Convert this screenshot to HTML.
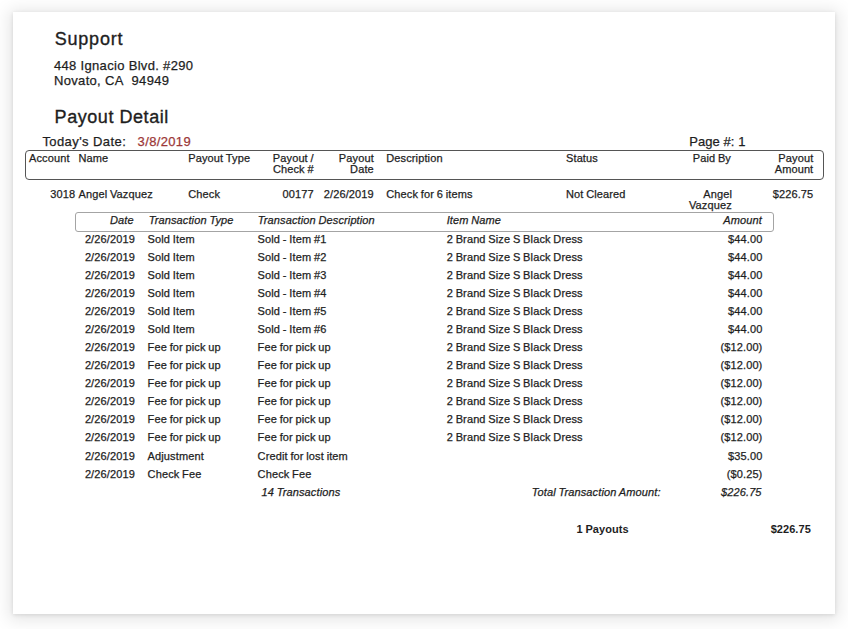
<!DOCTYPE html>
<html><head><meta charset="utf-8">
<style>
html,body{margin:0;padding:0;background:#fff;}
body{width:848px;height:629px;position:relative;overflow:hidden;font-family:"Liberation Sans",sans-serif;color:#1e1e1e;font-size:11px;word-spacing:-0.45px;}
#page{position:absolute;left:13px;top:12px;width:822px;height:602px;background:#fff;box-shadow:0 1px 4px rgba(0,0,0,0.11),0 2px 16px 4px rgba(0,0,0,0.10);}
.t{position:absolute;white-space:nowrap;line-height:1;-webkit-text-stroke:0.25px #1e1e1e;}
.box{position:absolute;box-sizing:border-box;}
</style></head><body>
<div id="page"></div>
<div class="box" style="left:25.3px;top:150.4px;width:799.2px;height:29.3px;border:1.8px solid #555;border-radius:4px;"></div>
<div class="box" style="left:75.3px;top:212.3px;width:698.6px;height:20.1px;border:1.7px solid #a4a4a4;border-radius:3px;"></div>
<div class="t" style="left:54.70px;top:30.46px;font-size:18px;word-spacing:0;letter-spacing:0.8px;-webkit-text-stroke:0.35px #1e1e1e;">Support</div>
<div class="t" style="left:54.00px;top:58.80px;font-size:13px;word-spacing:0;letter-spacing:0.32px;">448 Ignacio Blvd. #290</div>
<div class="t" style="left:54.00px;top:73.80px;font-size:13px;word-spacing:0;letter-spacing:0.32px;">Novato, CA&nbsp; 94949</div>
<div class="t" style="left:54.60px;top:107.96px;font-size:18px;word-spacing:0;letter-spacing:0.55px;-webkit-text-stroke:0.35px #1e1e1e;">Payout Detail</div>
<div class="t" style="left:42.40px;top:134.90px;font-size:13px;word-spacing:0;letter-spacing:0.42px;">Today's Date:</div>
<div class="t" style="left:137.60px;top:134.90px;font-size:13px;word-spacing:0;letter-spacing:0.35px;color:#9c3838;-webkit-text-stroke:0.25px #9c3838;">3/8/2019</div>
<div class="t" style="left:689.20px;top:134.90px;font-size:13px;word-spacing:0;letter-spacing:0.08px;">Page #: 1</div>
<div class="t" style="left:29.00px;top:153.49px;letter-spacing:0.12px;">Account</div>
<div class="t" style="left:78.50px;top:153.49px;letter-spacing:0.12px;">Name</div>
<div class="t" style="left:188.30px;top:153.49px;letter-spacing:0.12px;">Payout Type</div>
<div class="t" style="right:534.30px;top:153.49px;letter-spacing:0.12px;">Payout /</div>
<div class="t" style="right:534.30px;top:164.49px;letter-spacing:0.12px;">Check #</div>
<div class="t" style="right:474.20px;top:153.49px;letter-spacing:0.12px;">Payout</div>
<div class="t" style="right:474.20px;top:164.49px;letter-spacing:0.12px;">Date</div>
<div class="t" style="left:386.30px;top:153.49px;letter-spacing:0.12px;">Description</div>
<div class="t" style="left:566.00px;top:153.49px;letter-spacing:0.12px;">Status</div>
<div class="t" style="right:117.00px;top:153.49px;letter-spacing:0.12px;">Paid By</div>
<div class="t" style="right:34.70px;top:153.49px;letter-spacing:0.12px;">Payout</div>
<div class="t" style="right:34.70px;top:164.49px;letter-spacing:0.12px;">Amount</div>
<div class="t" style="left:50.20px;top:188.69px;letter-spacing:0.12px;">3018</div>
<div class="t" style="left:78.50px;top:188.69px;letter-spacing:0.12px;">Angel Vazquez</div>
<div class="t" style="left:188.30px;top:188.69px;letter-spacing:0.12px;">Check</div>
<div class="t" style="right:534.30px;top:188.69px;letter-spacing:0.12px;">00177</div>
<div class="t" style="right:474.20px;top:188.69px;letter-spacing:0.12px;">2/26/2019</div>
<div class="t" style="left:386.30px;top:188.69px;letter-spacing:0.12px;">Check for 6 items</div>
<div class="t" style="left:566.00px;top:188.69px;letter-spacing:0.12px;">Not Cleared</div>
<div class="t" style="right:116.00px;top:188.69px;letter-spacing:0.12px;">Angel</div>
<div class="t" style="right:116.20px;top:199.89px;letter-spacing:0.12px;">Vazquez</div>
<div class="t" style="right:34.70px;top:188.69px;letter-spacing:0.12px;">$226.75</div>
<div class="t" style="right:714.30px;top:214.89px;letter-spacing:0.12px;font-style:italic;">Date</div>
<div class="t" style="left:148.70px;top:214.89px;letter-spacing:0.12px;font-style:italic;">Transaction Type</div>
<div class="t" style="left:257.80px;top:214.89px;letter-spacing:0.12px;font-style:italic;">Transaction Description</div>
<div class="t" style="left:446.70px;top:214.89px;letter-spacing:0.12px;font-style:italic;">Item Name</div>
<div class="t" style="right:86.00px;top:214.89px;letter-spacing:0.12px;font-style:italic;">Amount</div>
<div class="t" style="right:713.10px;top:233.59px;letter-spacing:0.12px;">2/26/2019</div>
<div class="t" style="left:147.60px;top:233.59px;letter-spacing:0.12px;">Sold Item</div>
<div class="t" style="left:257.60px;top:233.59px;letter-spacing:0.12px;">Sold - Item #1</div>
<div class="t" style="left:446.70px;top:233.59px;letter-spacing:0.12px;">2 Brand Size S Black Dress</div>
<div class="t" style="right:85.60px;top:233.59px;letter-spacing:0.12px;">$44.00</div>
<div class="t" style="right:713.10px;top:251.67px;letter-spacing:0.12px;">2/26/2019</div>
<div class="t" style="left:147.60px;top:251.67px;letter-spacing:0.12px;">Sold Item</div>
<div class="t" style="left:257.60px;top:251.67px;letter-spacing:0.12px;">Sold - Item #2</div>
<div class="t" style="left:446.70px;top:251.67px;letter-spacing:0.12px;">2 Brand Size S Black Dress</div>
<div class="t" style="right:85.60px;top:251.67px;letter-spacing:0.12px;">$44.00</div>
<div class="t" style="right:713.10px;top:269.75px;letter-spacing:0.12px;">2/26/2019</div>
<div class="t" style="left:147.60px;top:269.75px;letter-spacing:0.12px;">Sold Item</div>
<div class="t" style="left:257.60px;top:269.75px;letter-spacing:0.12px;">Sold - Item #3</div>
<div class="t" style="left:446.70px;top:269.75px;letter-spacing:0.12px;">2 Brand Size S Black Dress</div>
<div class="t" style="right:85.60px;top:269.75px;letter-spacing:0.12px;">$44.00</div>
<div class="t" style="right:713.10px;top:287.83px;letter-spacing:0.12px;">2/26/2019</div>
<div class="t" style="left:147.60px;top:287.83px;letter-spacing:0.12px;">Sold Item</div>
<div class="t" style="left:257.60px;top:287.83px;letter-spacing:0.12px;">Sold - Item #4</div>
<div class="t" style="left:446.70px;top:287.83px;letter-spacing:0.12px;">2 Brand Size S Black Dress</div>
<div class="t" style="right:85.60px;top:287.83px;letter-spacing:0.12px;">$44.00</div>
<div class="t" style="right:713.10px;top:305.91px;letter-spacing:0.12px;">2/26/2019</div>
<div class="t" style="left:147.60px;top:305.91px;letter-spacing:0.12px;">Sold Item</div>
<div class="t" style="left:257.60px;top:305.91px;letter-spacing:0.12px;">Sold - Item #5</div>
<div class="t" style="left:446.70px;top:305.91px;letter-spacing:0.12px;">2 Brand Size S Black Dress</div>
<div class="t" style="right:85.60px;top:305.91px;letter-spacing:0.12px;">$44.00</div>
<div class="t" style="right:713.10px;top:323.99px;letter-spacing:0.12px;">2/26/2019</div>
<div class="t" style="left:147.60px;top:323.99px;letter-spacing:0.12px;">Sold Item</div>
<div class="t" style="left:257.60px;top:323.99px;letter-spacing:0.12px;">Sold - Item #6</div>
<div class="t" style="left:446.70px;top:323.99px;letter-spacing:0.12px;">2 Brand Size S Black Dress</div>
<div class="t" style="right:85.60px;top:323.99px;letter-spacing:0.12px;">$44.00</div>
<div class="t" style="right:713.10px;top:342.07px;letter-spacing:0.12px;">2/26/2019</div>
<div class="t" style="left:147.60px;top:342.07px;letter-spacing:0.12px;">Fee for pick up</div>
<div class="t" style="left:257.60px;top:342.07px;letter-spacing:0.12px;">Fee for pick up</div>
<div class="t" style="left:446.70px;top:342.07px;letter-spacing:0.12px;">2 Brand Size S Black Dress</div>
<div class="t" style="right:85.60px;top:342.07px;letter-spacing:0.12px;">($12.00)</div>
<div class="t" style="right:713.10px;top:360.15px;letter-spacing:0.12px;">2/26/2019</div>
<div class="t" style="left:147.60px;top:360.15px;letter-spacing:0.12px;">Fee for pick up</div>
<div class="t" style="left:257.60px;top:360.15px;letter-spacing:0.12px;">Fee for pick up</div>
<div class="t" style="left:446.70px;top:360.15px;letter-spacing:0.12px;">2 Brand Size S Black Dress</div>
<div class="t" style="right:85.60px;top:360.15px;letter-spacing:0.12px;">($12.00)</div>
<div class="t" style="right:713.10px;top:378.23px;letter-spacing:0.12px;">2/26/2019</div>
<div class="t" style="left:147.60px;top:378.23px;letter-spacing:0.12px;">Fee for pick up</div>
<div class="t" style="left:257.60px;top:378.23px;letter-spacing:0.12px;">Fee for pick up</div>
<div class="t" style="left:446.70px;top:378.23px;letter-spacing:0.12px;">2 Brand Size S Black Dress</div>
<div class="t" style="right:85.60px;top:378.23px;letter-spacing:0.12px;">($12.00)</div>
<div class="t" style="right:713.10px;top:396.31px;letter-spacing:0.12px;">2/26/2019</div>
<div class="t" style="left:147.60px;top:396.31px;letter-spacing:0.12px;">Fee for pick up</div>
<div class="t" style="left:257.60px;top:396.31px;letter-spacing:0.12px;">Fee for pick up</div>
<div class="t" style="left:446.70px;top:396.31px;letter-spacing:0.12px;">2 Brand Size S Black Dress</div>
<div class="t" style="right:85.60px;top:396.31px;letter-spacing:0.12px;">($12.00)</div>
<div class="t" style="right:713.10px;top:414.39px;letter-spacing:0.12px;">2/26/2019</div>
<div class="t" style="left:147.60px;top:414.39px;letter-spacing:0.12px;">Fee for pick up</div>
<div class="t" style="left:257.60px;top:414.39px;letter-spacing:0.12px;">Fee for pick up</div>
<div class="t" style="left:446.70px;top:414.39px;letter-spacing:0.12px;">2 Brand Size S Black Dress</div>
<div class="t" style="right:85.60px;top:414.39px;letter-spacing:0.12px;">($12.00)</div>
<div class="t" style="right:713.10px;top:432.47px;letter-spacing:0.12px;">2/26/2019</div>
<div class="t" style="left:147.60px;top:432.47px;letter-spacing:0.12px;">Fee for pick up</div>
<div class="t" style="left:257.60px;top:432.47px;letter-spacing:0.12px;">Fee for pick up</div>
<div class="t" style="left:446.70px;top:432.47px;letter-spacing:0.12px;">2 Brand Size S Black Dress</div>
<div class="t" style="right:85.60px;top:432.47px;letter-spacing:0.12px;">($12.00)</div>
<div class="t" style="right:713.10px;top:450.55px;letter-spacing:0.12px;">2/26/2019</div>
<div class="t" style="left:147.60px;top:450.55px;letter-spacing:0.12px;">Adjustment</div>
<div class="t" style="left:257.60px;top:450.55px;letter-spacing:0.12px;">Credit for lost item</div>
<div class="t" style="right:85.60px;top:450.55px;letter-spacing:0.12px;">$35.00</div>
<div class="t" style="right:713.10px;top:468.63px;letter-spacing:0.12px;">2/26/2019</div>
<div class="t" style="left:147.60px;top:468.63px;letter-spacing:0.12px;">Check Fee</div>
<div class="t" style="left:257.60px;top:468.63px;letter-spacing:0.12px;">Check Fee</div>
<div class="t" style="right:85.60px;top:468.63px;letter-spacing:0.12px;">($0.25)</div>
<div class="t" style="left:261.50px;top:486.89px;letter-spacing:0.12px;font-style:italic;">14 Transactions</div>
<div class="t" style="left:531.70px;top:486.89px;letter-spacing:0.12px;font-style:italic;">Total Transaction Amount:</div>
<div class="t" style="right:86.40px;top:486.89px;letter-spacing:0.12px;font-style:italic;">$226.75</div>
<div class="t" style="left:576.60px;top:524.09px;letter-spacing:0.05px;font-weight:bold;-webkit-text-stroke:0;">1 Payouts</div>
<div class="t" style="right:37.20px;top:524.09px;letter-spacing:0.05px;font-weight:bold;-webkit-text-stroke:0;">$226.75</div>
</body></html>
